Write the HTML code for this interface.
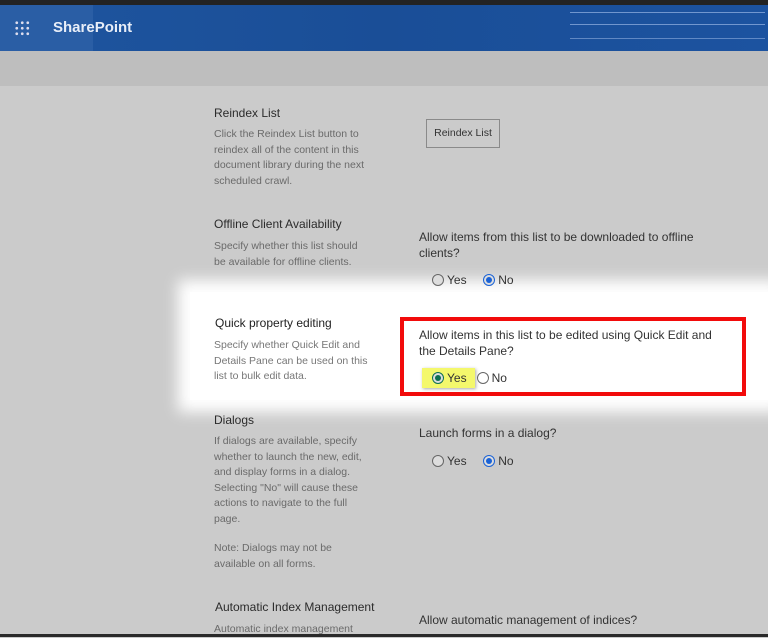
<!DOCTYPE html>
<html><head><style>
body{margin:0;width:768px;height:637px;overflow:hidden;background:#cbcbcb;font-family:"Liberation Sans",sans-serif;position:relative}
.a{position:absolute;white-space:nowrap}
.h{font-size:12px;color:#2b2b2b}
.d{font-size:10.5px;color:#6a6a6a;line-height:15.5px}
.r{font-size:12px;color:#333;line-height:16px}
.rad{display:inline-block;width:10px;height:10px;border:1px solid #666;border-radius:50%;vertical-align:-2px;margin-right:3px;background:#ddd;position:relative}
.on{border-color:#1a62d6}
.on:after{content:"";position:absolute;left:2px;top:2px;width:6px;height:6px;border-radius:50%;background:#1a62d6}
.g:after{background:#0d6e52}
.g{border-color:#0d6e52}
</style></head><body>
<div class="a" style="left:0;top:0;width:768px;height:5px;background:#232323"></div>
<div class="a" style="left:0;top:5px;width:768px;height:46px;background:linear-gradient(90deg,#1e559f,#1a4e97 50%,#1c53a0)"></div>
<div class="a" style="left:0;top:5px;width:93px;height:46px;background:#2a5ea5"></div>
<div class="a" style="left:14px;top:20px;width:16px;height:16px;background:radial-gradient(circle,#dde 1.2px,transparent 1.6px) 0 0/5.5px 5.5px"></div>
<div class="a" style="left:53px;top:19px;font-size:15px;font-weight:bold;color:#e8eef8">SharePoint</div>
<div class="a" style="left:570px;top:12px;width:195px;height:0;border-top:1px solid rgba(200,220,255,.5)"></div>
<div class="a" style="left:570px;top:24px;width:195px;height:0;border-top:1px solid rgba(200,220,255,.5)"></div>
<div class="a" style="left:570px;top:38px;width:195px;height:0;border-top:1px solid rgba(200,220,255,.4)"></div>
<div class="a" style="left:0;top:51px;width:768px;height:35px;background:#bebebe"></div>
<div class="a" style="left:190px;top:292px;width:580px;height:108px;background:#fff;box-shadow:0 0 14px 12px #fff"></div>

<div class="a h" style="left:214px;top:106px">Reindex List</div>
<div class="a d" style="left:214px;top:127px">Click the Reindex List button to<br>reindex all of the content in this<br>document library during the next<br>scheduled crawl.</div>
<div class="a" style="left:426px;top:119px;width:72px;height:27px;border:1px solid #8a8a8a;font-size:10.5px;color:#333;text-align:center;line-height:27px">Reindex List</div>

<div class="a h" style="left:214px;top:217px">Offline Client Availability</div>
<div class="a d" style="left:214px;top:239px">Specify whether this list should<br>be available for offline clients.</div>
<div class="a r" style="left:419px;top:229px">Allow items from this list to be downloaded to offline<br>clients?</div>
<div class="a r" style="left:432px;top:272px"><span class="rad"></span>Yes&nbsp;&nbsp;&nbsp;&nbsp;&nbsp;<span class="rad on"></span>No</div>

<div class="a h" style="left:215px;top:316px;color:#222">Quick property editing</div>
<div class="a d" style="left:214px;top:338px;color:#777">Specify whether Quick Edit and<br>Details Pane can be used on this<br>list to bulk edit data.</div>
<div class="a" style="left:400px;top:317px;width:338px;height:71px;border:4px solid #f20b0b"></div>
<div class="a r" style="left:419px;top:327px">Allow items in this list to be edited using Quick Edit and<br>the Details Pane?</div>
<div class="a" style="left:422px;top:368px;width:53px;height:20px;background:#f4f86c;box-shadow:1px 1px 3px #aaa"></div>
<div class="a r" style="left:432px;top:370px"><span class="rad on g"></span>Yes&nbsp;&nbsp;&nbsp;<span class="rad" style="background:#fff"></span>No</div>

<div class="a h" style="left:214px;top:413px">Dialogs</div>
<div class="a d" style="left:214px;top:434px">If dialogs are available, specify<br>whether to launch the new, edit,<br>and display forms in a dialog.<br>Selecting "No" will cause these<br>actions to navigate to the full<br>page.</div>
<div class="a d" style="left:214px;top:541px">Note: Dialogs may not be<br>available on all forms.</div>
<div class="a r" style="left:419px;top:425px">Launch forms in a dialog?</div>
<div class="a r" style="left:432px;top:453px"><span class="rad"></span>Yes&nbsp;&nbsp;&nbsp;&nbsp;&nbsp;<span class="rad on"></span>No</div>

<div class="a h" style="left:215px;top:600px">Automatic Index Management</div>
<div class="a d" style="left:214px;top:622px">Automatic index management</div>
<div class="a r" style="left:419px;top:612px">Allow automatic management of indices?</div>
<div class="a" style="left:0;top:634px;width:768px;height:3px;background:#2a2a2a"></div>
</body></html>
